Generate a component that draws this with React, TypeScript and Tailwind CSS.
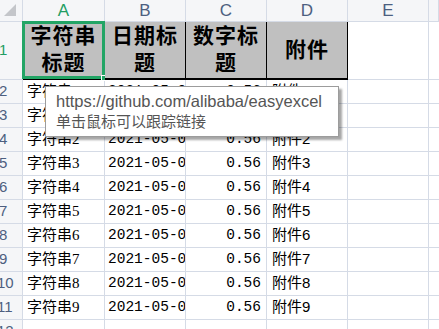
import React from 'react'

const cols = ['A', 'B', 'C', 'D', 'E', '']
const headers = [['字符串', '标题'], ['日期标', '题'], ['数字标', '题'], ['附件']]
const rows = Array.from({ length: 10 }, (_, i) => i)

const cjkSerif = 'font-["Liberation_Serif","Noto_Sans_CJK_SC",serif]'

function RowNum({ n, active }: { n: number; active?: boolean }) {
  const two = n >= 10
  return (
    <div className="relative overflow-hidden border-r border-b border-[#d5dbe6] bg-[#f5f6f8]">
      <span
        className={
          'absolute top-0 bottom-0 flex items-center text-[15px] font-["Liberation_Sans",sans-serif] ' +
          (two ? 'left-[-3px] ' : 'left-[-1px] ') +
          (active ? 'text-[#1f9d63]' : 'text-[#4d5f80]')
        }
      >
        {n}
      </span>
    </div>
  )
}

export default function App() {
  return (
    <div className="relative w-[439px] h-[329px] overflow-hidden bg-white">
      <div className="grid grid-cols-[23px_82px_81px_81px_81px_81px_1fr] grid-rows-[22px_58px_repeat(11,24px)]">
        {/* corner */}
        <div className="relative border-r border-b border-[#d5dbe6] bg-[#f5f6f8]">
          <svg width="22" height="21" className="absolute left-0 top-0">
            <polygon points="4,16 16,16 16,4" fill="#c4c6ca" />
          </svg>
        </div>
        {cols.map((c, i) => (
          <div
            key={i}
            className={
              'flex items-center justify-center border-r border-b border-[#d5dbe6] bg-[#f5f6f8] text-[17px] font-["Liberation_Sans",sans-serif] ' +
              (c === 'A' ? 'text-[#1f9d63]' : 'text-[#4d5f80]')
            }
          >
            {c}
          </div>
        ))}

        {/* title row */}
        <RowNum n={1} active />
        {headers.map((h, i) => (
          <div
            key={i}
            className={
              'relative flex flex-col items-center justify-center bg-[#c0c0c0] border-r border-r-black border-b-2 border-b-black text-[21px] leading-[27px] font-bold tracking-[1px] text-black ' +
              cjkSerif
            }
          >
            {h.map(t => (
              <span key={t}>{t}</span>
            ))}
            {i === 0 && (
              <>
                <div className="absolute left-[-1px] top-[-1px] right-[-1px] bottom-[-1px] border-[3px] border-[#22a565]" />
                <div className="absolute right-[-3px] bottom-[-3px] w-[6px] h-[6px] bg-[#22a565] border border-white" />
              </>
            )}
          </div>
        ))}
        <div className="border-r border-b border-[#d5dbe6]" />
        <div className="border-b border-[#d5dbe6]" />

        {rows.map(i => (
          <React.Fragment key={i}>
            <RowNum n={i + 2} />
            <div className={'flex items-center px-[4px] border-r border-b border-[#d5dbe6] text-[15px] text-black ' + cjkSerif}>
              字符串{i}
            </div>
            <div className='flex items-center overflow-hidden whitespace-nowrap pl-[3px] border-r border-b border-[#d5dbe6] text-[14.5px] text-black font-["Liberation_Mono",monospace]'>
              2021-05-01 00:00:00
            </div>
            <div className='flex items-center justify-end pr-[5px] border-r border-b border-[#d5dbe6] text-[14.5px] text-black font-["Liberation_Mono",monospace]'>
              0.56
            </div>
            <div className='flex items-center pl-[5px] border-r border-b border-[#d5dbe6] text-[15px] text-black font-["Liberation_Sans","Noto_Sans_CJK_SC",sans-serif]'>
              附件{i}
            </div>
            <div className="border-r border-b border-[#d5dbe6]" />
            <div className="border-b border-[#d5dbe6]" />
          </React.Fragment>
        ))}
        <RowNum n={12} />
        <div className="border-r border-[#d5dbe6]" />
        <div className="border-r border-[#d5dbe6]" />
        <div className="border-r border-[#d5dbe6]" />
        <div className="border-r border-[#d5dbe6]" />
        <div className="border-r border-[#d5dbe6]" />
        <div />
      </div>

      {/* hyperlink tooltip */}
      <div className="absolute left-[45px] top-[86px] w-[294px] h-[51px] bg-white border border-[#9c9c9c] shadow-[3px_3px_2px_rgba(0,0,0,0.35)] pl-[10px] pt-[5px] text-[#555]">
        <div className='text-[16.5px] leading-[19px] font-["Liberation_Sans",sans-serif]'>
          https://github.com/alibaba/easyexcel
        </div>
        <div className='text-[15px] leading-[20px] font-["Noto_Sans_CJK_SC",sans-serif]'>单击鼠标可以跟踪链接</div>
      </div>
    </div>
  )
}
